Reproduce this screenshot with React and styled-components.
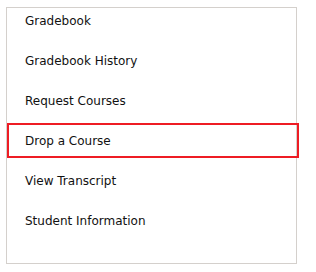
import React from 'react'
import styled, { createGlobalStyle } from 'styled-components'

const GlobalStyle = createGlobalStyle`
  html, body {
    margin: 0;
    padding: 0;
    background: #ffffff;
  }
  body {
    font-family: "DejaVu Sans", Verdana, sans-serif;
  }
`

const Page = styled.div`
  padding: 7px 0 0 6px;
`

const Panel = styled.nav`
  box-sizing: border-box;
  width: 291px;
  height: 257px;
  border: 1px solid #d4d0cc;
  background: #ffffff;
`

const Menu = styled.ul`
  list-style: none;
  margin: -5px 0 0;
  padding: 0;
`

const Item = styled.li`
  box-sizing: border-box;
  width: 292px;
  height: 35px;
  margin-bottom: 5px;
  border: 2px solid ${props => (props.$active ? '#ee1c24' : 'transparent')};
  padding-left: 16px;
  display: flex;
  align-items: center;
  font-size: 12px;
  color: #111111;
  cursor: pointer;
`

const links = [
  'Gradebook',
  'Gradebook History',
  'Request Courses',
  'Drop a Course',
  'View Transcript',
  'Student Information'
]

export default function App() {
  return (
    <>
      <GlobalStyle />
      <Page>
        <Panel>
          <Menu>
            {links.map(label => (
              <Item key={label} $active={label === 'Drop a Course'}>
                {label}
              </Item>
            ))}
          </Menu>
        </Panel>
      </Page>
    </>
  )
}
